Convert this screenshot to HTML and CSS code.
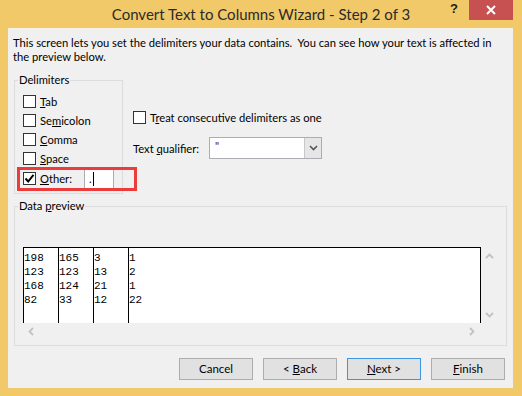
FILE: index.html
```html
<!DOCTYPE html>
<html>
<head>
<meta charset="utf-8">
<link rel="stylesheet" href="styles.css">
</head>
<body>
<div class="window">
  <div class="titlebar">
    <div class="tb-left"></div>
    <div class="title">Convert Text to Columns Wizard - Step 2 of 3</div>
    <div class="tb-right">
      <span class="help">?</span>
      <span class="close"><svg width="10" height="10" viewBox="0 0 10 10"><path d="M1 1L9 9M9 1L1 9" stroke="#fff" stroke-width="2"/></svg></span>
    </div>
  </div>
  <div class="client">
    <p class="intro">This screen lets you set the delimiters your data contains.&nbsp; You can see how your text is affected in<br>the preview below.</p>
    <div class="options">
      <fieldset class="group delims">
        <legend>Delimiters</legend>
        <div class="cb"><span class="box"></span><span class="lbl"><u>T</u>ab</span></div>
        <div class="cb"><span class="box"></span><span class="lbl">Se<u>m</u>icolon</span></div>
        <div class="cb"><span class="box"></span><span class="lbl"><u>C</u>omma</span></div>
        <div class="cb"><span class="box"></span><span class="lbl"><u>S</u>pace</span></div>
        <div class="cb other"><span class="box"><svg width="11" height="11" viewBox="0 0 11 11"><path d="M1.5 5.5L4.2 8.5L9.5 1.8" fill="none" stroke="#000" stroke-width="2"/></svg></span><span class="lbl olbl"><u>O</u>ther:</span><span class="input">.<i class="caret"></i></span></div>
      </fieldset>
      <div class="right">
        <div class="cb"><span class="box"></span><span class="lbl">T<u>r</u>eat consecutive delimiters as one</span></div>
        <div class="qual">
          <span class="qlbl">Text <u>q</u>ualifier:</span>
          <div class="combo"><span class="val">"</span><span class="drop"><svg width="9" height="6" viewBox="0 0 9 6"><path d="M1 1L4.5 4.5L8 1" fill="none" stroke="#555" stroke-width="1.6"/></svg></span></div>
        </div>
      </div>
    </div>
    <fieldset class="group preview">
      <legend>Data <u>p</u>review</legend>
      <div class="pv">
        <div class="data">
          <div class="col"><div>198</div><div>123</div><div>168</div><div>82</div></div>
          <div class="col"><div>165</div><div>123</div><div>124</div><div>33</div></div>
          <div class="col"><div>3</div><div>13</div><div>21</div><div>12</div></div>
          <div class="col last"><div>1</div><div>2</div><div>1</div><div>22</div></div>
        </div>
        <div class="vscroll">
          <svg width="9" height="6" viewBox="0 0 9 6"><path d="M1 5L4.5 1.5L8 5" fill="none" stroke="#c2c2c2" stroke-width="1.8"/></svg>
          <svg width="9" height="6" viewBox="0 0 9 6"><path d="M1 1L4.5 4.5L8 1" fill="none" stroke="#c2c2c2" stroke-width="1.8"/></svg>
        </div>
        <div class="hscroll">
          <svg width="6" height="9" viewBox="0 0 6 9"><path d="M5 1L1.5 4.5L5 8" fill="none" stroke="#c2c2c2" stroke-width="1.8"/></svg>
          <svg width="6" height="9" viewBox="0 0 6 9"><path d="M1 1L4.5 4.5L1 8" fill="none" stroke="#c2c2c2" stroke-width="1.8"/></svg>
        </div>
        <div class="corner"></div>
      </div>
    </fieldset>
    <div class="buttons">
      <button class="btn">Cancel</button>
      <button class="btn">&lt; <u>B</u>ack</button>
      <button class="btn default"><u>N</u>ext &gt;</button>
      <button class="btn"><u>F</u>inish</button>
    </div>
    <div class="highlight"></div>
  </div>
</div>
</body>
</html>
```
FILE: styles.css
```css
* { box-sizing: border-box; }
html, body { margin: 0; padding: 0; }
body {
  font-family: Lato, "Liberation Sans", sans-serif;
  font-size: 11.2px;
  color: #000;
  background: #f1c968;
}
.window {
  width: 522px;
  height: 396px;
  background: #f1c968;
  display: flex;
  flex-direction: column;
}
.titlebar {
  height: 28px;
  display: grid;
  grid-template-columns: minmax(0, 1fr) auto minmax(0, 1fr);
  align-items: start;
}
.title {
  font-size: 15px;
  color: #2b2b2b;
  line-height: 28px;
  white-space: nowrap;
}
.tb-right {
  display: flex;
  justify-content: flex-end;
  align-items: flex-start;
  padding-right: 9px;
}
.help {
  font-family: "Liberation Sans", sans-serif;
  font-weight: bold;
  font-size: 13px;
  line-height: 18px;
  margin-right: 11px;
  color: #222;
}
.close {
  width: 44px;
  height: 20px;
  background: #c75050;
  display: flex;
  align-items: center;
  justify-content: center;
}
.client {
  flex: 1;
  margin: 0 9px 8px 8px;
  background: #f0f0f0;
  position: relative;
  display: flex;
  flex-direction: column;
  border-top: 1px solid #f7f2e6;
}
.intro {
  margin: 7px 0 0 5px;
  line-height: 14px;
  white-space: nowrap;
}
.options {
  display: flex;
  margin-top: 9px;
}
.group {
  margin: 0;
  border: 1px solid #dcdcdc;
  min-width: 0;
}
.group legend {
  padding: 0 1px;
  margin-left: -5px;
  line-height: 14px;
}
.delims {
  margin-left: 6px;
  width: 109px;
  padding: 5px 8px 4px 8px;
}
.cb {
  height: 19px;
  display: flex;
  align-items: center;
  white-space: nowrap;
}
.box {
  width: 13px;
  height: 13px;
  border: 1px solid #333;
  background: #fff;
  flex: none;
  display: flex;
  align-items: center;
  justify-content: center;
}
.lbl { margin-left: 4px; }
.other { height: 21px; }
.olbl { width: 44px; }
.input {
  width: 30px;
  height: 20px;
  border: 1px solid #abadb3;
  background: #fff;
  padding-left: 4px;
  display: flex;
  align-items: center;
  line-height: 14px;
}
.caret {
  display: inline-block;
  width: 1px;
  height: 14px;
  background: #000;
  margin-left: 1px;
}
.right {
  margin-left: 10px;
  padding-top: 35px;
}
.qual {
  margin-top: 10px;
  display: flex;
  align-items: center;
  white-space: nowrap;
}
.qlbl { width: 76px; flex: none; }
.combo {
  width: 113px;
  height: 22px;
  border: 1px solid #abadb3;
  background: #fff;
  display: flex;
}
.val {
  flex: 1;
  padding-left: 5px;
  line-height: 16px;
  color: #5a1010;
}
.drop {
  width: 17px;
  background: #e6e6e6;
  border-left: 1px solid #c8c8c8;
  display: flex;
  align-items: center;
  justify-content: center;
}
.preview {
  margin: 5px 6px 0 6px;
  padding: 34px 8px 6px 8px;
}
.pv {
  display: grid;
  grid-template-columns: 1fr 17px;
  grid-template-rows: 76px 16px;
}
.data {
  background: #fff;
  border-top: 1px solid #000;
  border-right: 1px solid #000;
  display: flex;
  font-family: "Liberation Mono", monospace;
  font-size: 11px;
  line-height: 14px;
}
.col {
  width: 35px;
  border-left: 1px solid #000;
  padding-top: 3px;
}
.col.last { flex: 1; }
.vscroll {
  display: flex;
  flex-direction: column;
  justify-content: space-between;
  align-items: center;
  padding: 6px 0 5px 0;
}
.hscroll {
  display: flex;
  justify-content: space-between;
  align-items: center;
  padding: 0 6px 0 5px;
}
.buttons {
  display: flex;
  justify-content: flex-end;
  gap: 10px;
  margin: 12px 8px 0 0;
}
.btn {
  width: 74px;
  height: 22px;
  background: #e1e1e1;
  border: 1px solid #adadad;
  font-family: inherit;
  font-size: 11.5px;
  color: #000;
  padding: 0;
  line-height: 18px;
}
.btn.default { border-color: #3c95e0; }
.highlight {
  position: absolute;
  left: 9px;
  top: 138px;
  width: 120px;
  height: 24px;
  border: 3px solid #ec3b3b;
}
```
